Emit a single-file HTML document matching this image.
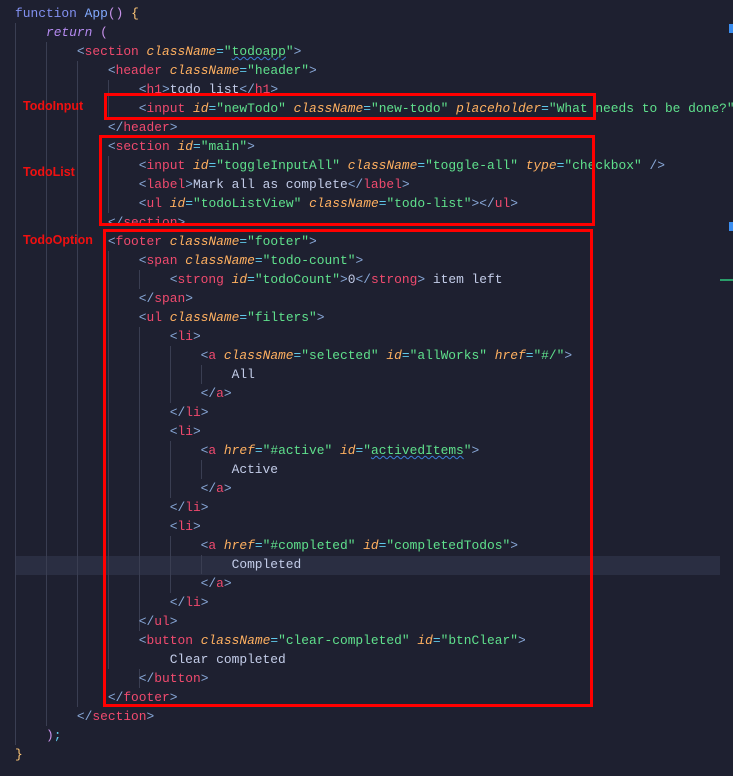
<!DOCTYPE html>
<html><head><meta charset="utf-8"><style>
html,body{margin:0;padding:0;}
body{width:733px;height:776px;background:#1e2030;position:relative;overflow:hidden;}
pre{position:absolute;left:15px;top:4px;margin:0;font-family:"Liberation Mono",monospace;font-size:12.9px;line-height:19px;color:#c3cce8;}
.b{color:#89a8d8}.t{color:#f04a6e}.a{color:#ffb060;font-style:italic}.s{color:#5fe08c}.e{color:#60c8ea}
.k{color:#8290f0}.f{color:#82aaff}.y{color:#ffc777}.r{color:#b58af0;font-style:italic}.p{color:#c792ea}
.w{text-decoration:underline wavy #3d7fd8;text-decoration-thickness:1px;}
.g{position:absolute;width:1px;background:#3a3e52;}
.box{position:absolute;border:3px solid #f00;box-sizing:border-box;}
.lbl{position:absolute;color:#f01010;font-family:"Liberation Sans",sans-serif;font-weight:bold;font-size:12.5px;}
.hl{position:absolute;left:15px;width:705px;top:556px;height:19px;background:#2a2e42;}
</style></head><body>
<div class="hl"></div>
<div class="g" style="left:15px;top:23px;height:722px"></div>
<div class="g" style="left:46px;top:42px;height:684px"></div>
<div class="g" style="left:77px;top:61px;height:646px"></div>
<div class="g" style="left:108px;top:80px;height:38px"></div>
<div class="g" style="left:108px;top:156px;height:57px"></div>
<div class="g" style="left:108px;top:251px;height:418px"></div>
<div class="g" style="left:139px;top:270px;height:19px"></div>
<div class="g" style="left:139px;top:327px;height:304px"></div>
<div class="g" style="left:139px;top:669px;height:19px"></div>
<div class="g" style="left:170px;top:346px;height:57px"></div>
<div class="g" style="left:170px;top:441px;height:57px"></div>
<div class="g" style="left:170px;top:536px;height:57px"></div>
<div class="g" style="left:201px;top:365px;height:19px"></div>
<div class="g" style="left:201px;top:460px;height:19px"></div>
<div class="g" style="left:201px;top:555px;height:19px"></div>
<pre><span class="k">function</span> <span class="f">App</span><span class="p">()</span> <span class="y">{</span>
    <span class="r">return</span> <span class="p">(</span>
        <span class="b">&lt;</span><span class="t">section</span> <span class="a">className</span><span class="e">=</span><span class="s">"<span class="w">todoapp</span>"</span><span class="b">&gt;</span>
            <span class="b">&lt;</span><span class="t">header</span> <span class="a">className</span><span class="e">=</span><span class="s">"header"</span><span class="b">&gt;</span>
                <span class="b">&lt;</span><span class="t">h1</span><span class="b">&gt;</span>todo list<span class="b">&lt;/</span><span class="t">h1</span><span class="b">&gt;</span>
                <span class="b">&lt;</span><span class="t">input</span> <span class="a">id</span><span class="e">=</span><span class="s">"newTodo"</span> <span class="a">className</span><span class="e">=</span><span class="s">"new-todo"</span> <span class="a">placeholder</span><span class="e">=</span><span class="s">"What needs to be done?"</span>
            <span class="b">&lt;/</span><span class="t">header</span><span class="b">&gt;</span>
            <span class="b">&lt;</span><span class="t">section</span> <span class="a">id</span><span class="e">=</span><span class="s">"main"</span><span class="b">&gt;</span>
                <span class="b">&lt;</span><span class="t">input</span> <span class="a">id</span><span class="e">=</span><span class="s">"toggleInputAll"</span> <span class="a">className</span><span class="e">=</span><span class="s">"toggle-all"</span> <span class="a">type</span><span class="e">=</span><span class="s">"checkbox"</span> <span class="b">/&gt;</span>
                <span class="b">&lt;</span><span class="t">label</span><span class="b">&gt;</span>Mark all as complete<span class="b">&lt;/</span><span class="t">label</span><span class="b">&gt;</span>
                <span class="b">&lt;</span><span class="t">ul</span> <span class="a">id</span><span class="e">=</span><span class="s">"todoListView"</span> <span class="a">className</span><span class="e">=</span><span class="s">"todo-list"</span><span class="b">&gt;&lt;/</span><span class="t">ul</span><span class="b">&gt;</span>
            <span class="b">&lt;/</span><span class="t">section</span><span class="b">&gt;</span>
            <span class="b">&lt;</span><span class="t">footer</span> <span class="a">className</span><span class="e">=</span><span class="s">"footer"</span><span class="b">&gt;</span>
                <span class="b">&lt;</span><span class="t">span</span> <span class="a">className</span><span class="e">=</span><span class="s">"todo-count"</span><span class="b">&gt;</span>
                    <span class="b">&lt;</span><span class="t">strong</span> <span class="a">id</span><span class="e">=</span><span class="s">"todoCount"</span><span class="b">&gt;</span>0<span class="b">&lt;/</span><span class="t">strong</span><span class="b">&gt;</span> item left
                <span class="b">&lt;/</span><span class="t">span</span><span class="b">&gt;</span>
                <span class="b">&lt;</span><span class="t">ul</span> <span class="a">className</span><span class="e">=</span><span class="s">"filters"</span><span class="b">&gt;</span>
                    <span class="b">&lt;</span><span class="t">li</span><span class="b">&gt;</span>
                        <span class="b">&lt;</span><span class="t">a</span> <span class="a">className</span><span class="e">=</span><span class="s">"selected"</span> <span class="a">id</span><span class="e">=</span><span class="s">"allWorks"</span> <span class="a">href</span><span class="e">=</span><span class="s">"#/"</span><span class="b">&gt;</span>
                            All
                        <span class="b">&lt;/</span><span class="t">a</span><span class="b">&gt;</span>
                    <span class="b">&lt;/</span><span class="t">li</span><span class="b">&gt;</span>
                    <span class="b">&lt;</span><span class="t">li</span><span class="b">&gt;</span>
                        <span class="b">&lt;</span><span class="t">a</span> <span class="a">href</span><span class="e">=</span><span class="s">"#active"</span> <span class="a">id</span><span class="e">=</span><span class="s">"<span class="w">activedItems</span>"</span><span class="b">&gt;</span>
                            Active
                        <span class="b">&lt;/</span><span class="t">a</span><span class="b">&gt;</span>
                    <span class="b">&lt;/</span><span class="t">li</span><span class="b">&gt;</span>
                    <span class="b">&lt;</span><span class="t">li</span><span class="b">&gt;</span>
                        <span class="b">&lt;</span><span class="t">a</span> <span class="a">href</span><span class="e">=</span><span class="s">"#completed"</span> <span class="a">id</span><span class="e">=</span><span class="s">"completedTodos"</span><span class="b">&gt;</span>
                            Completed
                        <span class="b">&lt;/</span><span class="t">a</span><span class="b">&gt;</span>
                    <span class="b">&lt;/</span><span class="t">li</span><span class="b">&gt;</span>
                <span class="b">&lt;/</span><span class="t">ul</span><span class="b">&gt;</span>
                <span class="b">&lt;</span><span class="t">button</span> <span class="a">className</span><span class="e">=</span><span class="s">"clear-completed"</span> <span class="a">id</span><span class="e">=</span><span class="s">"btnClear"</span><span class="b">&gt;</span>
                    Clear completed
                <span class="b">&lt;/</span><span class="t">button</span><span class="b">&gt;</span>
            <span class="b">&lt;/</span><span class="t">footer</span><span class="b">&gt;</span>
        <span class="b">&lt;/</span><span class="t">section</span><span class="b">&gt;</span>
    <span class="p">)</span><span class="e">;</span>
<span class="y">}</span></pre>
<div class="box" style="left:104px;top:93px;width:492px;height:27px"></div>
<div class="box" style="left:99px;top:135px;width:496px;height:91px"></div>
<div class="box" style="left:103px;top:229px;width:490px;height:478px"></div>
<div class="lbl" style="left:23px;top:99px">TodoInput</div>
<div class="lbl" style="left:23px;top:165px">TodoList</div>
<div class="lbl" style="left:23px;top:233px">TodoOption</div>
<div style="position:absolute;left:729px;top:24px;width:4px;height:9px;background:#3b8ef0"></div>
<div style="position:absolute;left:729px;top:222px;width:4px;height:9px;background:#3b8ef0"></div>
<div style="position:absolute;left:720px;top:279px;width:13px;height:2px;background:#2a9d6a"></div>
</body></html>
